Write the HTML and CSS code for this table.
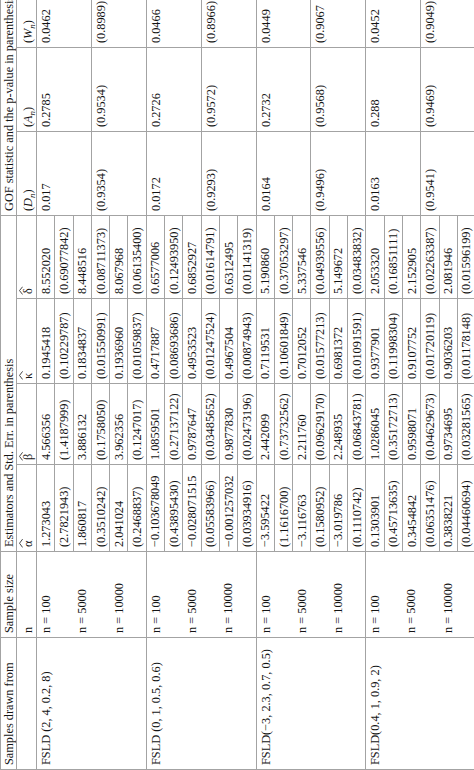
FILE: index.html
```html
<!DOCTYPE html>
<html>
<head>
<meta charset="utf-8">
<link rel="stylesheet" href="styles.css">
</head>
<body>
<div class="stage">
<div class="rot">
<table class="tbl">
<colgroup>
<col class="c-src"><col class="c-ss"><col class="c-a"><col class="c-b"><col class="c-k"><col class="c-d"><col class="c-g"><col class="c-g"><col class="c-g">
</colgroup>
<thead>
<tr class="h1">
<th>Samples drawn from</th><th>Sample size</th><th colspan="4">Estimators and Std. Err. in parenthesis</th><th colspan="3">GOF statistic and the p-value in parenthesis</th>
</tr>
<tr class="h2">
<th></th><th>n</th>
<th><span class="hat">α<svg viewBox="0 0 10 4" preserveAspectRatio="none"><path d="M0.6 3.6 L5 0.5 L9.4 3.6" fill="none" stroke="#2a2a2a" stroke-width="0.9"/></svg></span></th>
<th><span class="hat">β<svg viewBox="0 0 10 4" preserveAspectRatio="none"><path d="M0.6 3.6 L5 0.5 L9.4 3.6" fill="none" stroke="#2a2a2a" stroke-width="0.9"/></svg></span></th>
<th><span class="hat">κ<svg viewBox="0 0 10 4" preserveAspectRatio="none"><path d="M0.6 3.6 L5 0.5 L9.4 3.6" fill="none" stroke="#2a2a2a" stroke-width="0.9"/></svg></span></th>
<th><span class="hat">δ<svg viewBox="0 0 10 4" preserveAspectRatio="none"><path d="M0.6 3.6 L5 0.5 L9.4 3.6" fill="none" stroke="#2a2a2a" stroke-width="0.9"/></svg></span></th>
<th>(<i>D</i><sub><i>n</i></sub>)</th><th>(<i>A</i><sub><i>n</i></sub>)</th><th>(<i>W</i><sub><i>n</i></sub>)</th>
</tr>
</thead>
<tbody>
<tr><td class="src" rowspan="6">FSLD (2, 4, 0.2, 8)</td><td class="ss" rowspan="2">n = 100</td><td>1.273043</td><td>4.566356</td><td>0.1945418</td><td>8.552020</td><td class="gof" rowspan="3">0.017</td><td class="gof" rowspan="3">0.2785</td><td class="gof" rowspan="3">0.0462</td></tr>
<tr><td>(2.7821943)</td><td>(1.4187999)</td><td>(0.10229787)</td><td>(0.69077842)</td></tr>
<tr><td class="ss" rowspan="2">n = 5000</td><td>1.860817</td><td>3.886132</td><td>0.1834837</td><td>8.448516</td></tr>
<tr><td>(0.3510242)</td><td>(0.1758050)</td><td>(0.01550991)</td><td>(0.08711373)</td><td class="gof" rowspan="3">(0.9354)</td><td class="gof" rowspan="3">(0.9534)</td><td class="gof" rowspan="3">(0.8989)</td></tr>
<tr><td class="ss last" rowspan="2">n = 10000</td><td>2.041024</td><td>3.962356</td><td>0.1936960</td><td>8.067968</td></tr>
<tr><td>(0.2468837)</td><td>(0.1247017)</td><td>(0.01059837)</td><td>(0.06135400)</td></tr>

<tr><td class="src" rowspan="6">FSLD (0, 1, 0.5, 0.6)</td><td class="ss" rowspan="2">n = 100</td><td>−0.103678049</td><td>1.0859501</td><td>0.4717887</td><td>0.6577006</td><td class="gof" rowspan="3">0.0172</td><td class="gof" rowspan="3">0.2726</td><td class="gof" rowspan="3">0.0466</td></tr>
<tr><td>(0.43895430)</td><td>(0.27137122)</td><td>(0.08693686)</td><td>(0.12493950)</td></tr>
<tr><td class="ss" rowspan="2">n = 5000</td><td>−0.028071515</td><td>0.9787647</td><td>0.4953523</td><td>0.6852927</td></tr>
<tr><td>(0.05583966)</td><td>(0.03485652)</td><td>(0.01247524)</td><td>(0.01614791)</td><td class="gof" rowspan="3">(0.9293)</td><td class="gof" rowspan="3">(0.9572)</td><td class="gof" rowspan="3">(0.8966)</td></tr>
<tr><td class="ss last" rowspan="2">n = 10000</td><td>−0.001257032</td><td>0.9877830</td><td>0.4967504</td><td>0.6312495</td></tr>
<tr><td>(0.03934916)</td><td>(0.02473196)</td><td>(0.00874943)</td><td>(0.01141319)</td></tr>

<tr><td class="src" rowspan="6">FSLD(−3, 2.3, 0.7, 0.5)</td><td class="ss" rowspan="2">n = 100</td><td>−3.595422</td><td>2.442099</td><td>0.7119531</td><td>5.190860</td><td class="gof" rowspan="3">0.0164</td><td class="gof" rowspan="3">0.2732</td><td class="gof" rowspan="3">0.0449</td></tr>
<tr><td>(1.1616700)</td><td>(0.73732562)</td><td>(0.10601849)</td><td>(0.37053297)</td></tr>
<tr><td class="ss" rowspan="2">n = 5000</td><td>−3.116763</td><td>2.211760</td><td>0.7012052</td><td>5.337546</td></tr>
<tr><td>(0.1580952)</td><td>(0.09629170)</td><td>(0.01577213)</td><td>(0.04939556)</td><td class="gof" rowspan="3">(0.9496)</td><td class="gof" rowspan="3">(0.9568)</td><td class="gof" rowspan="3">(0.9067</td></tr>
<tr><td class="ss last" rowspan="2">n = 10000</td><td>−3.019786</td><td>2.248935</td><td>0.6981372</td><td>5.149672</td></tr>
<tr><td>(0.1110742)</td><td>(0.06843781)</td><td>(0.01091591)</td><td>(0.03483832)</td></tr>

<tr><td class="src" rowspan="6">FSLD(0.4, 1, 0.9, 2)</td><td class="ss" rowspan="2">n = 100</td><td>0.1303901</td><td>1.0286045</td><td>0.9377901</td><td>2.053320</td><td class="gof" rowspan="3">0.0163</td><td class="gof" rowspan="3">0.288</td><td class="gof" rowspan="3">0.0452</td></tr>
<tr><td>(0.45713635)</td><td>(0.35172713)</td><td>(0.11998304)</td><td>(0.16851111)</td></tr>
<tr><td class="ss" rowspan="2">n = 5000</td><td>0.3454842</td><td>0.9598071</td><td>0.9107752</td><td>2.152905</td></tr>
<tr><td>(0.06351476)</td><td>(0.04629673)</td><td>(0.01720119)</td><td>(0.02263387)</td><td class="gof" rowspan="3">(0.9541)</td><td class="gof" rowspan="3">(0.9469)</td><td class="gof" rowspan="3">(0.9049)</td></tr>
<tr><td class="ss last" rowspan="2">n = 10000</td><td>0.3838221</td><td>0.9734695</td><td>0.9036203</td><td>2.081946</td></tr>
<tr><td>(0.04460694)</td><td>(0.03281565)</td><td>(0.01178148)</td><td>(0.01596199)</td></tr>
</tbody>
</table>
</div>
</div>
</body>
</html>
```
FILE: styles.css
```css
html, body {
  margin: 0;
  padding: 0;
  background: #ffffff;
}
.stage {
  width: 474px;
  height: 770px;
  overflow: hidden;
}
.rot {
  width: 806px;
  transform-origin: 0 0;
  transform: translateY(770px) rotate(-90deg);
}
.tbl {
  border-collapse: collapse;
  table-layout: fixed;
  width: 806px;
  font-family: "Liberation Serif", "Times New Roman", serif;
  font-size: 12.3px;
  color: #141414;
}
.c-src { width: 132px; }
.c-ss { width: 86px; }
.c-a { width: 87px; }
.c-b { width: 81px; }
.c-k { width: 85px; }
.c-d { width: 83px; }
.c-g { width: 84px; }
.tbl th, .tbl td {
  border: 1px solid #a3a3a3;
  padding: 0 4px;
  text-align: left;
  font-weight: normal;
  white-space: nowrap;
  overflow: hidden;
  line-height: 14px;
}
.h1 th { height: 15px; vertical-align: middle; }
.h2 th { height: 18px; vertical-align: bottom; padding-bottom: 1px; }
.tbl tbody tr { height: 18.3px; }
.tbl tbody td { vertical-align: middle; }
.tbl td.src, .tbl td.ss, .tbl td.gof {
  vertical-align: top;
  padding-top: 2px;
}
.tbl td.ss { border-bottom: hidden; }
.tbl td.ss.last { border-bottom: 1px solid #a3a3a3; }
.tbl sub { font-size: 9px; line-height: 0; }
.hat {
  position: relative;
  display: inline-block;
  padding-right: 1px;
}
.hat svg {
  position: absolute;
  left: -1px;
  top: -2px;
  width: calc(100% + 2px);
  height: 4px;
}
```
